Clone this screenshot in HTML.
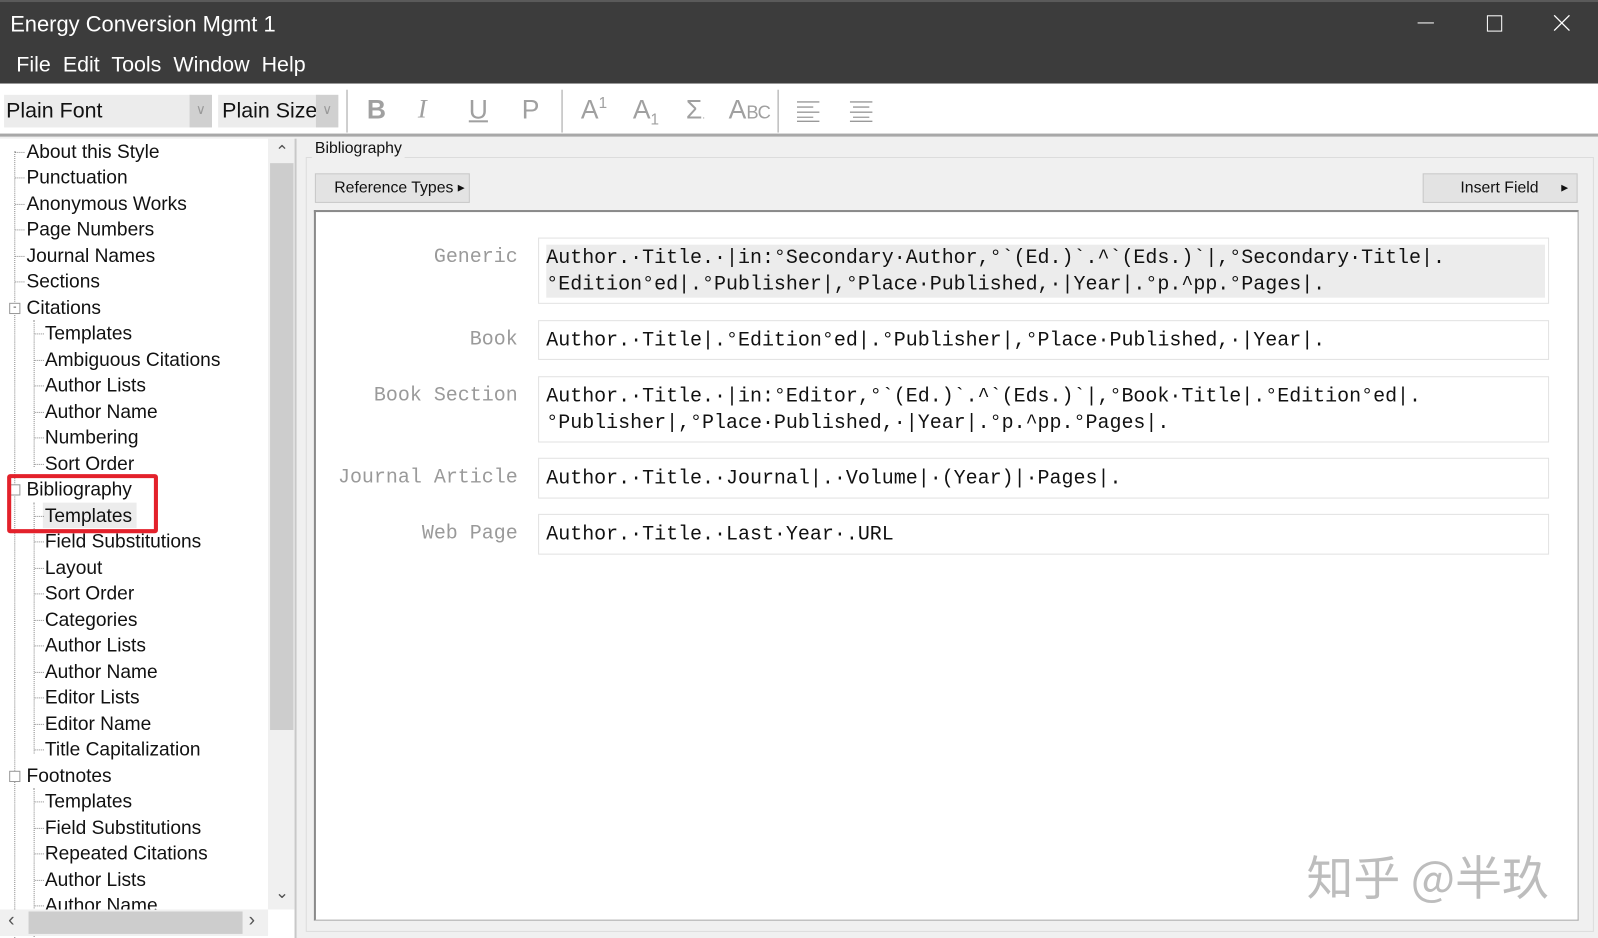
<!DOCTYPE html>
<html><head><meta charset="utf-8">
<style>
html,body{margin:0;padding:0;width:1598px;height:938px;overflow:hidden;background:#f0f0f0}
#w{position:absolute;left:0;top:0;width:1568px;height:920px;transform:scale(1.01913,1.01957);transform-origin:0 0;font-family:"Liberation Sans",sans-serif;}
.a{position:absolute}
.title{background:#3c3c3c;left:0;top:0;width:1568px;height:82px;border-top:2px solid #5a5a5a;box-sizing:border-box}
.wt{color:#fff;font-size:21px}
.tb{background:#fff;left:0;top:82px;width:1568px;height:52px;border-bottom:3px solid #a8a8a8;box-sizing:border-box}
.combo{background:#ececec;height:32px;top:93px;font-size:21px;line-height:32px;color:#111}
.dd{background:#d0d0d0;width:22px;height:32px;top:93px;color:#999;font-size:13px;text-align:center;line-height:30px}
.ic{color:#a0a0a0;font-size:26px;top:92px}
.sep{width:1px;background:#a0a0a0;top:88px;height:42px}
.tree{left:0;top:136px;width:291px;height:784px;background:#fff;border-right:2px solid #c8c8c8;box-sizing:border-box;overflow:hidden}
.it{position:absolute;font-size:18.8px;color:#111;white-space:nowrap;line-height:24px}
.hl{position:absolute;border-top:1px dotted #888;width:9px}
.vl{position:absolute;border-left:1px dotted #888;width:0}
.lbl{position:absolute;font-family:"Liberation Mono",monospace;font-size:19.6px;color:#9a9a9a;text-align:right;width:200px;left:308px}
.fld{position:absolute;left:528px;width:992px;background:#fff;border:1px solid #e2e2e2;box-sizing:border-box;font-family:"Liberation Mono",monospace;font-size:19.6px;color:#111;padding:6px 0 0 7px;line-height:26px;white-space:pre}
.btn{position:absolute;top:170px;height:29px;background:#e3e3e3;border:1px solid #c8c8c8;box-sizing:border-box;font-size:15.5px;line-height:27px;color:#111}
</style></head><body><div id="w">
<div class="a title"></div>
<div class="a wt" style="left:10px;top:12px;font-size:21.5px">Energy Conversion Mgmt 1</div>
<div class="a wt" style="left:16px;top:52px;word-spacing:6px">File Edit Tools Window Help</div>
<div class="a" style="left:1391px;top:22px;width:16px;height:1px;background:#fff"></div>
<div class="a" style="left:1459px;top:15px;width:13px;height:14px;border:1px solid #fff"></div>
<svg class="a" style="left:1524px;top:14px" width="17" height="17"><path d="M1 1L16 16M16 1L1 16" stroke="#fff" stroke-width="1.3"/></svg>

<div class="a tb"></div>
<div class="a combo" style="left:4px;width:182px;padding-left:2px">Plain Font</div>
<div class="a dd" style="left:186px">&#8744;</div>
<div class="a combo" style="left:214px;width:96px;padding-left:4px">Plain Size</div>
<div class="a dd" style="left:310px">&#8744;</div>
<div class="a sep" style="left:340px"></div>
<div class="a ic" style="left:360px;font-weight:bold">B</div>
<div class="a ic" style="left:410px;font-style:italic;font-family:'Liberation Serif',serif">I</div>
<div class="a ic" style="left:460px;text-decoration:underline">U</div>
<div class="a ic" style="left:512px">P</div>
<div class="a sep" style="left:551px"></div>
<div class="a ic" style="left:570px">A<span style="font-size:15px;vertical-align:10px">1</span></div>
<div class="a ic" style="left:621px">A<span style="font-size:15px;vertical-align:-6px">1</span></div>
<div class="a ic" style="left:673px">&Sigma;<span style="font-size:10px">.</span></div>
<div class="a ic" style="left:715px">A<span style="font-size:18px;letter-spacing:-1px">BC</span></div>
<div class="a sep" style="left:763px"></div>
<svg class="a" style="left:782px;top:98px" width="80" height="22"><g stroke="#999" stroke-width="1.3"><path d="M0 2H22M0 7H16M0 12H22M0 17H16M0 21H22"/><path d="M52 2H74M55 7H71M52 12H74M55 17H71M52 21H74"/></g></svg>

<div class="a tree">
<div class="vl" style="left:14px;top:12px;height:778px"></div>
<div class="vl" style="left:33px;top:178px;height:144px"></div>
<div class="vl" style="left:33px;top:357px;height:246px"></div>
<div class="vl" style="left:33px;top:637px;height:150px"></div>
</div>
<div class="a" style="left:0;top:136px;width:262px;height:756px;overflow:hidden">
<div class="it" style="left:26px;top:1px">About this Style</div><div class="hl" style="left:15px;top:13px"></div>
<div class="it" style="left:26px;top:26px">Punctuation</div><div class="hl" style="left:15px;top:38px"></div>
<div class="it" style="left:26px;top:52px">Anonymous Works</div><div class="hl" style="left:15px;top:64px"></div>
<div class="it" style="left:26px;top:77px">Page Numbers</div><div class="hl" style="left:15px;top:89px"></div>
<div class="it" style="left:26px;top:103px">Journal Names</div><div class="hl" style="left:15px;top:115px"></div>
<div class="it" style="left:26px;top:128px">Sections</div><div class="hl" style="left:15px;top:140px"></div>
<div class="it" style="left:26px;top:154px">Citations</div>
<div class="a" style="left:9px;top:161px;width:9px;height:9px;border:1px solid #999;background:#fff;font-size:10px;line-height:8px;text-align:center;color:#333">-</div>
<div class="it" style="left:44px;top:179px">Templates</div><div class="hl" style="left:34px;top:191px"></div>
<div class="it" style="left:44px;top:205px">Ambiguous Citations</div><div class="hl" style="left:34px;top:217px"></div>
<div class="it" style="left:44px;top:230px">Author Lists</div><div class="hl" style="left:34px;top:242px"></div>
<div class="it" style="left:44px;top:256px">Author Name</div><div class="hl" style="left:34px;top:268px"></div>
<div class="it" style="left:44px;top:281px">Numbering</div><div class="hl" style="left:34px;top:293px"></div>
<div class="it" style="left:44px;top:307px">Sort Order</div><div class="hl" style="left:34px;top:319px"></div>
<div class="it" style="left:26px;top:332px">Bibliography</div>
<div class="a" style="left:9px;top:339px;width:9px;height:9px;border:1px solid #999;background:#fff"></div>
<div class="a" style="left:42px;top:357px;width:92px;height:25px;background:#ececec"></div>
<div class="it" style="left:44px;top:358px">Templates</div><div class="hl" style="left:34px;top:370px"></div>
<div class="it" style="left:44px;top:383px">Field Substitutions</div><div class="hl" style="left:34px;top:395px"></div>
<div class="it" style="left:44px;top:409px">Layout</div><div class="hl" style="left:34px;top:421px"></div>
<div class="it" style="left:44px;top:434px">Sort Order</div><div class="hl" style="left:34px;top:446px"></div>
<div class="it" style="left:44px;top:460px">Categories</div><div class="hl" style="left:34px;top:472px"></div>
<div class="it" style="left:44px;top:485px">Author Lists</div><div class="hl" style="left:34px;top:497px"></div>
<div class="it" style="left:44px;top:511px">Author Name</div><div class="hl" style="left:34px;top:523px"></div>
<div class="it" style="left:44px;top:536px">Editor Lists</div><div class="hl" style="left:34px;top:548px"></div>
<div class="it" style="left:44px;top:562px">Editor Name</div><div class="hl" style="left:34px;top:574px"></div>
<div class="it" style="left:44px;top:587px">Title Capitalization</div><div class="hl" style="left:34px;top:599px"></div>
<div class="it" style="left:26px;top:613px">Footnotes</div>
<div class="a" style="left:9px;top:620px;width:9px;height:9px;border:1px solid #999;background:#fff"></div>
<div class="it" style="left:44px;top:638px">Templates</div><div class="hl" style="left:34px;top:650px"></div>
<div class="it" style="left:44px;top:664px">Field Substitutions</div><div class="hl" style="left:34px;top:676px"></div>
<div class="it" style="left:44px;top:689px">Repeated Citations</div><div class="hl" style="left:34px;top:701px"></div>
<div class="it" style="left:44px;top:715px">Author Lists</div><div class="hl" style="left:34px;top:727px"></div>
<div class="it" style="left:44px;top:740px">Author Name</div><div class="hl" style="left:34px;top:752px"></div>
</div>
<div class="a" style="left:7px;top:465px;width:148px;height:58px;border:4px solid #e3212b;border-radius:3px;box-sizing:border-box"></div>
<div class="a" style="left:263px;top:136px;width:26px;height:756px;background:#f0f0f0"></div>
<div class="a" style="left:265px;top:160px;width:23px;height:556px;background:#cdcdcd"></div>
<div class="a" style="left:270px;top:139px;color:#555;font-size:16px">&#8963;</div>
<div class="a" style="left:270px;top:866px;color:#555;font-size:16px">&#8964;</div>
<div class="a" style="left:0;top:892px;width:263px;height:26px;background:#f0f0f0"></div>
<div class="a" style="left:28px;top:894px;width:210px;height:22px;background:#cdcdcd"></div>
<div class="a" style="left:8px;top:892px;color:#555;font-size:19px">&lsaquo;</div>
<div class="a" style="left:244px;top:892px;color:#555;font-size:19px">&rsaquo;</div>

<div class="a" style="left:296px;top:136px;width:1272px;height:784px;background:#f0f0f0"></div>
<div class="a" style="left:300px;top:154px;width:1264px;height:760px;border:1px solid #dcdcdc;box-sizing:border-box"></div>
<div class="a" style="left:306px;top:137px;font-size:15.5px;background:#f0f0f0;padding:0 3px;color:#111">Bibliography</div>
<div class="btn" style="left:309px;width:152px;padding-left:18px">Reference Types <span style="font-size:9px;vertical-align:2px">&#9654;</span></div>
<div class="btn" style="left:1396px;width:152px;padding-left:36px">Insert Field <span style="font-size:9px;margin-left:18px;vertical-align:2px">&#9654;</span></div>
<div class="a" style="left:308px;top:206px;width:1241px;height:697px;background:#fff;border:1px solid #a8a8a8;border-top:2px solid #8a8a8a;border-left:2px solid #8a8a8a;box-sizing:border-box"></div>

<div class="lbl" style="top:241px">Generic</div>
<div class="fld" style="top:233px;height:65px"><span style="background:#ececec;display:inline-block;width:980px">Author.·Title.·|in:°Secondary·Author,°`(Ed.)`.^`(Eds.)`|,°Secondary·Title|.
°Edition°ed|.°Publisher|,°Place·Published,·|Year|.°p.^pp.°Pages|.</span></div>
<div class="lbl" style="top:322px">Book</div>
<div class="fld" style="top:314px;height:39px">Author.·Title|.°Edition°ed|.°Publisher|,°Place·Published,·|Year|.</div>
<div class="lbl" style="top:377px">Book Section</div>
<div class="fld" style="top:369px;height:65px">Author.·Title.·|in:°Editor,°`(Ed.)`.^`(Eds.)`|,°Book·Title|.°Edition°ed|.
°Publisher|,°Place·Published,·|Year|.°p.^pp.°Pages|.</div>
<div class="lbl" style="top:457px">Journal Article</div>
<div class="fld" style="top:449px;height:40px">Author.·Title.·Journal|.·Volume|·(Year)|·Pages|.</div>
<div class="lbl" style="top:512px">Web Page</div>
<div class="fld" style="top:504px;height:40px">Author.·Title.·Last·Year·.URL</div>

<div class="a" style="left:1282px;top:826px;font-family:'Noto Sans CJK SC',sans-serif;font-size:46px;color:#bdbdbd;white-space:nowrap">知乎 @半玖</div>
</div></body></html>
